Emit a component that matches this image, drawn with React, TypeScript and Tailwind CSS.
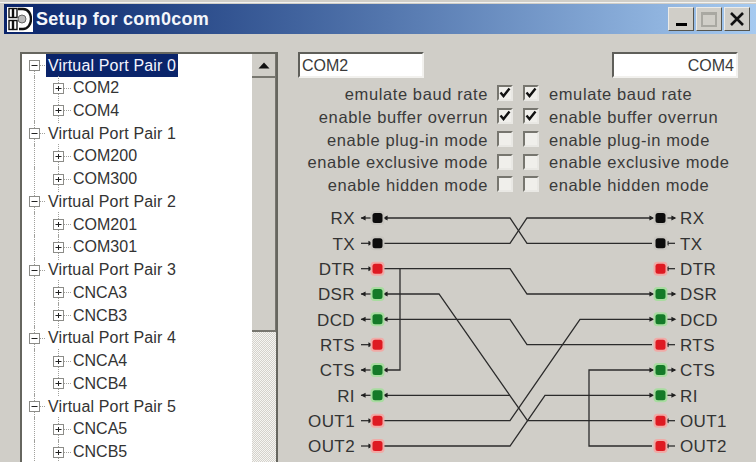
const FONT = "font-['Liberation_Sans',Arial,sans-serif]";

const treeRows = [
  { t: "Virtual Port Pair 0", pair: true, selected: true },
  { t: "COM2" }, { t: "COM4" },
  { t: "Virtual Port Pair 1", pair: true },
  { t: "COM200" }, { t: "COM300" },
  { t: "Virtual Port Pair 2", pair: true },
  { t: "COM201" }, { t: "COM301" },
  { t: "Virtual Port Pair 3", pair: true },
  { t: "CNCA3" }, { t: "CNCB3" },
  { t: "Virtual Port Pair 4", pair: true },
  { t: "CNCA4" }, { t: "CNCB4" },
  { t: "Virtual Port Pair 5", pair: true },
  { t: "CNCA5" }, { t: "CNCB5" },
];

function TreeGlyph({ pair, first }: { pair?: boolean; first?: boolean }) {
  const w = pair ? 24 : 49;
  const boxX = pair ? 7.5 : 31.5;
  return (
    <svg width={w} height={23} className="shrink-0 overflow-visible">
      <g stroke="#a0a09c" strokeWidth="1" strokeDasharray="1 1" fill="none">
        {pair ? (
          <>
            {!first && <line x1="12.5" y1="-1" x2="12.5" y2="6" />}
            <line x1="12.5" y1="17" x2="12.5" y2="24" />
            <line x1="18" y1="11.5" x2="24" y2="11.5" />
          </>
        ) : (
          <>
            <line x1="12.5" y1="-1" x2="12.5" y2="24" />
            <line x1="36.5" y1="-1" x2="36.5" y2="24" />
            <line x1="42" y1="11.5" x2="49" y2="11.5" />
          </>
        )}
      </g>
      <rect x={boxX} y="6.5" width="10" height="10" fill="#fff" stroke="#8c8c88" />
      <line x1={boxX + 2} y1="11.5" x2={boxX + 8} y2="11.5" stroke="#222" />
      {!pair && <line x1={boxX + 5} y1="9" x2={boxX + 5} y2="14" stroke="#222" />}
    </svg>
  );
}

function Tree() {
  return (
    <div className="flex w-[258px] h-[440px] shrink-0 border-2 border-[#66665f] border-b-0 bg-white">
      <div className="flex-1 min-w-0">
        {treeRows.map((r, i) => (
          <div key={i} className="flex items-center h-[22.75px] text-[16px] text-[#333] whitespace-nowrap">
            <TreeGlyph pair={r.pair} first={i === 0} />
            <span
              className={
                r.selected
                  ? "bg-[#0a246a] text-[#f4f4ff] h-[23px] leading-[23px] w-[132px] pl-[2px] tracking-[0.16px]"
                  : r.pair
                  ? "pl-[2px] tracking-[0.16px]"
                  : "pl-[2px]"
              }
            >
              {r.t}
            </span>
          </div>
        ))}
      </div>
      <div className="flex flex-col w-[24px] shrink-0">
        <div className="flex items-center justify-center h-[24px] bg-[#d0cec8] border-b-2 border-r border-[#77766f]">
          <svg width="12" height="7" viewBox="0 0 12 7">
            <path d="M6 0.5 L11.5 6.5 L0.5 6.5 Z" fill="#111" />
          </svg>
        </div>
        <div className="h-[254px] bg-[#d0cec8] border-b-2 border-r border-[#77766f]" />
        <div className="flex-1 bg-[repeating-conic-gradient(#d4d2cc_0_25%,#f6f5f2_0_50%)] bg-[length:2px_2px]" />
      </div>
    </div>
  );
}

function EditBox({ text, right }: { text: string; right?: boolean }) {
  return (
    <div
      className={
        "w-[126px] h-[26px] bg-white border-2 border-t-[#5f5f5a] border-l-[#5f5f5a] border-r-[#f2f1ee] border-b-[#f2f1ee] text-[16px] leading-[24px] text-[#3a3a3a] px-[2px] " +
        (right ? "text-right" : "text-left")
      }
    >
      {text}
    </div>
  );
}

function Check({ on }: { on: boolean }) {
  return (
    <div className="flex items-center justify-center w-4 h-4 -mt-[2px] bg-[#f0efeb] border-2 border-t-[#77766f] border-l-[#77766f] border-r-[#e9e8e4] border-b-[#e9e8e4]">
      {on && (
        <svg width="12" height="12" viewBox="0 0 12 12">
          <path d="M1.5 5.5 L4.5 9 L10.5 1.5" fill="none" stroke="#111" strokeWidth="2.4" />
        </svg>
      )}
    </div>
  );
}

const options = [
  { t: "emulate baud rate", on: true },
  { t: "enable buffer overrun", on: true },
  { t: "enable plug-in mode", on: false },
  { t: "enable exclusive mode", on: false },
  { t: "enable hidden mode", on: false },
];

function Options() {
  return (
    <div className="mt-[4px]">
      {options.map((o) => (
        <div
          key={o.t}
          className="grid grid-cols-[189px_16px_16px_1fr] gap-x-[10px] items-center h-[22.75px] text-[16.5px] tracking-[0.6px] text-[#3a3a3a] whitespace-nowrap"
        >
          <span className="text-right -mr-px">{o.t}</span>
          <Check on={o.on} />
          <Check on={o.on} />
          <span>{o.t}</span>
        </div>
      ))}
    </div>
  );
}

const Y = [218, 243.3, 268.7, 294, 319.3, 344.7, 370, 395.3, 420.7, 446];
type C = "k" | "r" | "g";
const leftPins: { c: C; out: boolean; inner?: boolean }[] = [
  { c: "k", out: true, inner: true },
  { c: "k", out: false },
  { c: "r", out: false },
  { c: "g", out: true, inner: true },
  { c: "g", out: true, inner: true },
  { c: "r", out: false },
  { c: "g", out: true, inner: true },
  { c: "g", out: true, inner: true },
  { c: "r", out: false },
  { c: "r", out: false },
];
const FILL: Record<C, string> = { k: "#0c0c0c", r: "#de1a22", g: "#147a28" };
const HALO: Record<C, string> = { k: "#c8c6c0", r: "#f0aaa6", g: "#a8dca0" };

function Pin({ x, y, c }: { x: number; y: number; c: C }) {
  return (
    <g>
      <rect x={x - 7} y={y - 7} width="14" height="14" rx="4" fill={HALO[c]} />
      <rect x={x - 5} y={y - 5} width="10" height="10" rx="2.5" fill={FILL[c]} />
    </g>
  );
}

const WIRES = [
  "M383 218H510L527 243.3H652",
  "M383 243.3H510L527 218H652",
  "M383 268.7H510L527 294H652",
  "M383 294H439L527.5 420.7",
  "M383 319.3H510L527 344.7H652",
  "M383 395.3H510",
  "M383 420.7H510L580 319.3H652",
  "M383 446H510L545 395.3H652",
  "M527.5 420.7H652",
  "M383 370H400V268.7",
  "M652 370H589V446H652",
];

function Wiring() {
  return (
    <svg width="323" height="254" viewBox="355 205 323 254" className="shrink-0">
      <g fill="none" stroke="#2b2b2b" strokeWidth="1.3">
        {WIRES.map((d) => (
          <path key={d} d={d} />
        ))}
      </g>
      {Y.map((y, i) => {
        const p = leftPins[i];
        return (
          <g key={i}>
            <g stroke="#222" strokeWidth="1.2" fill="#111">
              <line x1="361" y1={y} x2="372" y2={y} />
              {p.out ? <path d={`M362 ${y}l3 -1.5v3z`} /> : <path d={`M372 ${y}l-3 -1.5v3z`} />}
              <line x1="665" y1={y} x2="675" y2={y} />
              {p.out ? <path d={`M675 ${y}l-3 -1.5v3z`} /> : <path d={`M665 ${y}l3 -1.5v3z`} />}
              {p.inner && <path d={`M384 ${y}l3 -1.5v3z`} />}
              {p.inner && <path d={`M653 ${y}l-3 -1.5v3z`} />}
            </g>
            <Pin x={377.5} y={y} c={p.c} />
            <Pin x={660.5} y={y} c={p.c} />
          </g>
        );
      })}
    </svg>
  );
}

const LABELS = ["RX", "TX", "DTR", "DSR", "DCD", "RTS", "CTS", "RI", "OUT1", "OUT2"];

function Diagram() {
  return (
    <div className="flex mt-[9.5px] text-[17px] tracking-[0.4px] text-[#333]">
      <div className="w-[57px] shrink-0 pt-px">
        {LABELS.map((l) => (
          <div key={l} className="h-[25.33px] leading-[25.33px] text-right">{l}</div>
        ))}
      </div>
      <Wiring />
      <div className="ml-[2px] pt-px">
        {LABELS.map((l) => (
          <div key={l} className="h-[25.33px] leading-[25.33px]">{l}</div>
        ))}
      </div>
    </div>
  );
}

function WinButton({ children }: { children: React.ReactNode }) {
  return (
    <div className="flex items-center justify-center w-[26px] h-[24px] bg-[#d0cec8] border border-t-[#ecebe7] border-l-[#ecebe7] border-r-[#55554f] border-b-[#55554f]">
      {children}
    </div>
  );
}

function TitleBar() {
  return (
    <div className="flex items-center h-[30px] bg-gradient-to-r from-[#0a246a] to-[#a6caf0] pl-[3px] pr-[6px]">
      <div className="flex items-center justify-center w-[26px] h-[25px] bg-white shrink-0">
        <svg width="24" height="24" viewBox="0 0 24 24">
          <rect x="1" y="1.5" width="3.5" height="9" fill="#fff" stroke="#111" strokeWidth="1.4" />
          <rect x="5.5" y="1.5" width="3.5" height="9" fill="#fff" stroke="#111" strokeWidth="1.4" />
          <rect x="1" y="13.5" width="3.5" height="9" fill="#fff" stroke="#111" strokeWidth="1.4" />
          <rect x="5.5" y="13.5" width="3.5" height="9" fill="#fff" stroke="#111" strokeWidth="1.4" />
          <path d="M10 2 H15 C21 2 23 8 23 12 C23 17 20 22 15 22 H11" fill="none" stroke="#111" strokeWidth="2.4" />
          <circle cx="14" cy="12" r="4" fill="#bbb" stroke="#666" />
        </svg>
      </div>
      <span className="ml-[3px] text-[18px] font-bold tracking-[0.3px] text-[#f4f6fb] whitespace-nowrap">
        Setup for com0com
      </span>
      <div className="flex items-center gap-[2px] ml-auto">
        <WinButton>
          <span className="block w-[11px] h-[3px] bg-black mt-[11px]" />
        </WinButton>
        <WinButton>
          <span className="block w-[16px] h-[15px] border-2 border-t-[3px] border-[#a9a8a2] mt-[1px]" />
        </WinButton>
        <WinButton>
          <svg width="14" height="14" viewBox="0 0 14 14">
            <path d="M1 1L13 13M13 1L1 13" stroke="#111" strokeWidth="2.6" />
          </svg>
        </WinButton>
      </div>
    </div>
  );
}

export default function App() {
  return (
    <div className={"w-[756px] h-[462px] overflow-hidden bg-[#d0cec8] " + FONT}>
      <div className="h-[3px] border-b border-[#f2f2f0]" />
      <div className="pl-[4px] pt-px">
        <TitleBar />
      </div>
      <div className="flex pl-[20px] pt-[18px]">
        <Tree />
        <div className="ml-[20px] w-[440px] shrink-0">
          <div className="flex justify-between">
            <EditBox text="COM2" />
            <EditBox text="COM4" right />
          </div>
          <Options />
          <Diagram />
        </div>
      </div>
    </div>
  );
}
